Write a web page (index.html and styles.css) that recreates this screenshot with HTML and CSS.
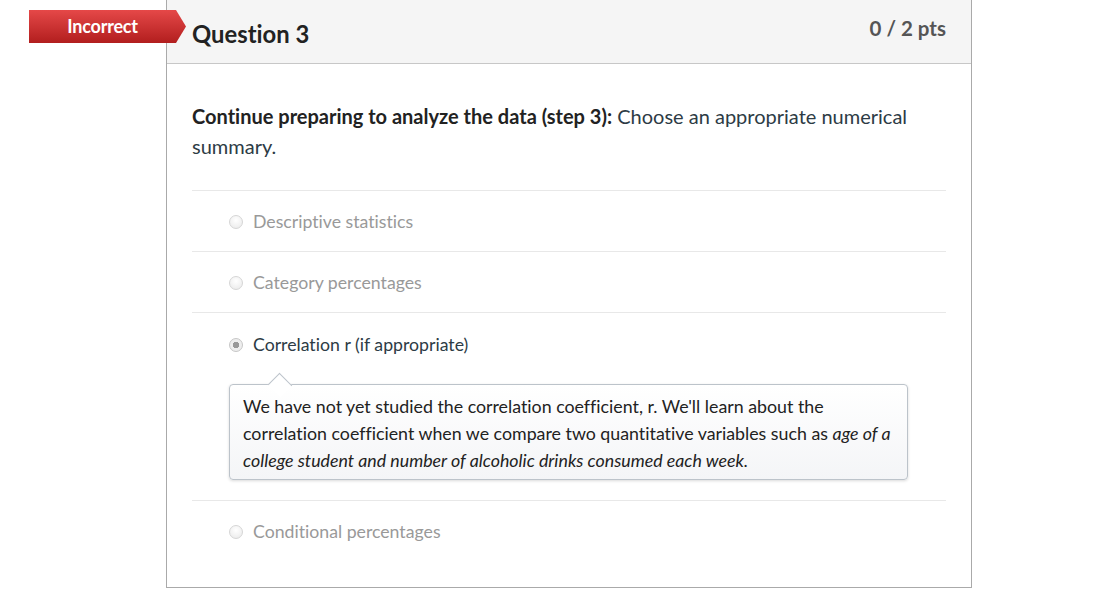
FILE: index.html
```html
<!DOCTYPE html>
<html lang="en">
<head>
    <meta charset="UTF-8">
    <title>Question 3</title>
    <link rel="stylesheet" href="styles.css">
</head>
<body>
    <div class="page">
        <div class="question">
            <div class="badge">Incorrect</div>

            <div class="header">
                <h2 class="title">Question 3</h2>
                <div class="points">0 / 2 pts</div>
            </div>

            <div class="body">
                <p class="prompt"><strong>Continue preparing to analyze the data (step 3):</strong> Choose an appropriate numerical summary.</p>

                <div class="answers">
                    <div class="answer">
                        <span class="radio"></span>
                        <span class="label">Descriptive statistics</span>
                    </div>
                    <div class="answer">
                        <span class="radio"></span>
                        <span class="label">Category percentages</span>
                    </div>
                    <div class="answer selected">
                        <div class="row">
                            <span class="radio"></span>
                            <span class="label">Correlation r (if appropriate)</span>
                        </div>
                        <div class="comment">
                            We have not yet studied the correlation coefficient, r. We'll learn about the correlation coefficient when we compare two quantitative variables such as <em>age of a college student and number of alcoholic drinks consumed each week.</em>
                        </div>
                    </div>
                    <div class="answer">
                        <span class="radio"></span>
                        <span class="label">Conditional percentages</span>
                    </div>
                </div>
            </div>
        </div>
    </div>
</body>
</html>
```

FILE: styles.css
```css
/* General styles */
* {
    margin: 0;
    padding: 0;
    box-sizing: border-box;
}

body {
    font-family: 'Lato', 'Open Sans', sans-serif;
    font-variant-ligatures: no-common-ligatures;
    background: #fff;
    color: #2d3b45;
}

.page {
    padding-left: 166px;
}

.question {
    position: relative;
    width: 806px;
    border: 1px solid #aaa;
    border-top: none;
}

/* Incorrect badge */
.badge {
    position: absolute;
    left: -138px;
    top: 10px;
    width: 157px;
    height: 33px;
    padding-right: 10px;
    background: linear-gradient(to bottom, #e54848, #b21e1e);
    clip-path: polygon(0 0, 147px 0, 157px 50%, 147px 100%, 0 100%);
    color: #fff;
    font-size: 18px;
    font-weight: bold;
    text-align: center;
    line-height: 33px;
    letter-spacing: -0.2px;
}

.header {
    display: flex;
    justify-content: space-between;
    height: 64px;
    padding: 0 25px;
    background: #f5f5f5;
    border-bottom: 1px solid #c7c7c7;
}

.title {
    margin-top: 19px;
    font-size: 23.8px;
    font-weight: bold;
    color: #222;
    line-height: 30px;
}

.points {
    margin-top: 13px;
    font-size: 20.5px;
    font-weight: bold;
    color: #555;
    line-height: 30px;
}

.body {
    padding: 37px 25px 26px;
}

.prompt {
    font-size: 20px;
    line-height: 30px;
    color: #2d3b45;
    margin-bottom: 29px;
}

.prompt strong {
    color: #222;
}

.answers {
    border-top: 1px solid #e8e8e8;
}

.answer {
    display: flex;
    align-items: center;
    gap: 10px;
    padding: 21px 0 19px 37px;
    border-bottom: 1px solid #e8e8e8;
    font-size: 17.7px;
    line-height: 20px;
    color: #999;
}

.answer:last-child {
    border-bottom: none;
}

.answer.selected {
    display: block;
    padding-top: 22px;
    padding-bottom: 20px;
    color: #2d3b45;
}

.row {
    display: flex;
    align-items: center;
    gap: 10px;
}

.radio {
    width: 14px;
    height: 14px;
    border-radius: 50%;
    border: 1px solid #d6d6d6;
    background: radial-gradient(circle at 50% 35%, #fff, #e8e8e8);
    flex-shrink: 0;
}

.selected .radio {
    border-color: #c6c6c6;
    background: radial-gradient(circle, #999 0 3px, #eee 3.5px);
}

.comment {
    position: relative;
    margin: 29px 38px 0 0;
    padding: 8px 13px 5px;
    border: 1px solid #bcc3ca;
    border-radius: 4px;
    background: linear-gradient(to bottom, #fff, #f4f5f7);
    box-shadow: 0 1px 3px rgba(0, 0, 0, 0.15);
    color: #222;
    font-size: 17.8px;
    line-height: 27px;
}

.comment::before {
    content: "";
    position: absolute;
    left: 41px;
    top: -9px;
    width: 17px;
    height: 17px;
    background: #fff;
    border-top: 1px solid #bcc3ca;
    border-left: 1px solid #bcc3ca;
    transform: rotate(45deg) scaleY(0.92);
}
```
